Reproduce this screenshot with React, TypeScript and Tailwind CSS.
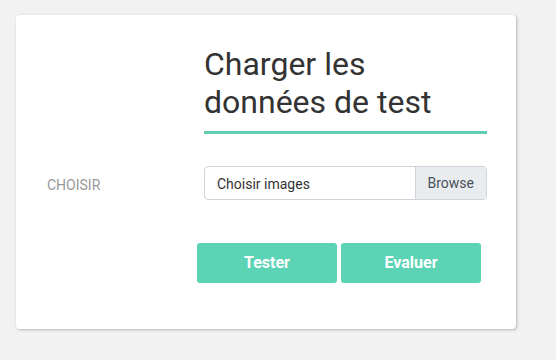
export default function App() {
  return (
    <div className="min-h-screen w-full bg-[#f2f2f2] pt-[15px] pl-[16px] font-['Roboto',sans-serif]">
      <div className="w-[500px] h-[314px] bg-white rounded-[4px] shadow-[1px_1px_3px_rgba(0,0,0,0.25)] pt-[30px]">
        {/* Title */}
        <div className="ml-[188px] w-[283px] border-b-[3px] border-[#62cdb0] pb-[10px]">
          <h1 className="text-[32px] leading-[38px] text-[#333333] font-normal">
            Charger les
            <br />
            données de test
          </h1>
        </div>

        {/* File row */}
        <div className="flex items-center mt-[32px]">
          <label className="w-[188px] pl-[31px] pt-[5px] text-[14px] text-[#999999] uppercase">Choisir</label>
          <div className="flex w-[283px] h-[34px] border border-[#ced4da] rounded-[4px] overflow-hidden">
            <span className="flex-1 flex items-center pl-[12px] pt-[3px] text-[14px] text-[#333333]">Choisir images</span>
            <span className="flex items-center px-[12px] bg-[#e9ecef] border-l border-[#ced4da] text-[14px] text-[#495057]">
              Browse
            </span>
          </div>
        </div>

        {/* Actions */}
        <div className="flex gap-[4px] ml-[181px] mt-[43px]">
          <button className="w-[140px] h-[40px] rounded-[3px] bg-[#5cd3b4] text-white text-[16px] font-bold">
            Tester
          </button>
          <button className="w-[140px] h-[40px] rounded-[3px] bg-[#5cd3b4] text-white text-[16px] font-bold">
            Evaluer
          </button>
        </div>
      </div>
    </div>
  );
}
